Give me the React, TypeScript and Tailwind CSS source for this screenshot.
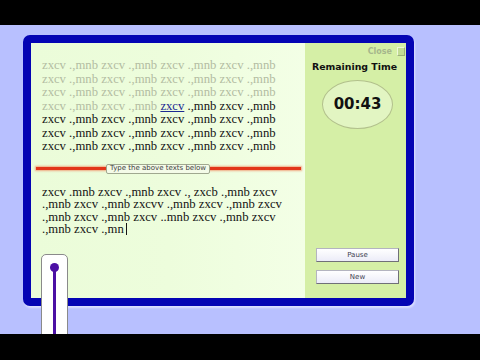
import React from "react";

const L = "zxcv .,mnb zxcv .,mnb zxcv .,mnb zxcv .,mnb";

export default function App() {
  return (
    <div className="w-[480px] h-[360px] bg-black flex flex-col overflow-hidden">
      <div className="h-[25px] shrink-0 bg-black" />
      <div className="relative h-[309px] shrink-0 bg-[#b8c0ff] pt-[10px] pl-[23px] overflow-hidden">
        <div className="w-[391px] h-[271px] border-[8px] border-[#0404b4] rounded-[7px] flex overflow-hidden shadow-[1px_2px_2px_rgba(255,255,255,0.5)]">
          {/* Left panel */}
          <div className="w-[274px] h-full bg-gradient-to-r from-[#ebfcd9] via-[#edfddc] to-[#f3ffe6] flex flex-col pl-[11px] pt-[16px] font-['Liberation_Serif','DejaVu_Serif',serif]">
            <div className="text-[12.7px] leading-[13.5px] whitespace-pre">
              <div className="text-[#b3bca2]">{L}</div>
              <div className="text-[#b3bca2]">{L}</div>
              <div className="text-[#b3bca2]">{L}</div>
              <div>
                <span className="text-[#b3bca2]">zxcv .,mnb zxcv .,mnb </span>
                <span className="text-[#1c2a92] underline">zxcv</span>
                <span className="text-[#141414]"> .,mnb zxcv .,mnb</span>
              </div>
              <div className="text-[#141414]">{L}</div>
              <div className="text-[#141414]">{L}</div>
              <div className="text-[#141414]">{L}</div>
            </div>
            <div className="relative h-[10px] mt-[10px] ml-[-6px] mr-[4px] flex items-center">
              <div className="w-full h-[3px] bg-[#e2361a] shadow-[0_0_2px_1px_rgba(240,150,110,0.8)]" />
              <div className="absolute left-[70px] top-0 h-[10px] px-[3px] flex items-center bg-[#f4fbe8] border border-[#a0a890] rounded-[2px] text-[7px] leading-none text-[#404040] font-['DejaVu_Sans',sans-serif]">
                Type the above texts below
              </div>
            </div>
            <div className="mt-[12px] text-[12.7px] leading-[12.5px] text-[#141414] whitespace-pre">
              <div>zxcv .mnb zxcv .,mnb zxcv ., zxcb .,mnb zxcv</div>
              <div>.,mnb zxcv .,mnb zxcvv .,mnb zxcv .,mnb zxcv</div>
              <div>.,mnb zxcv .,mnb zxcv ..mnb zxcv .,mnb zxcv</div>
              <div className="flex items-center">
                <span>.,mnb zxcv .,mn</span>
                <span className="ml-[2px] w-px h-[12px] bg-[#141414]" />
              </div>
            </div>
          </div>
          {/* Right panel */}
          <div className="flex-1 h-full bg-[#d5efa6] flex flex-col font-['DejaVu_Sans',sans-serif]">
            <div className="flex items-center justify-end h-[13px] mt-[2px] mr-[1px] gap-[5px]">
              <span className="text-[8px] font-bold text-[#a6b68c] leading-none">Close</span>
              <div className="w-[8px] h-[9px] bg-[#c2dc94] border border-t-[#eef8dc] border-l-[#eef8dc] border-b-[#9cb078] border-r-[#9cb078]" />
            </div>
            <div className="mt-[3px] text-center text-[9.4px] font-bold text-[#111] leading-[12px] pr-[2px]">
              Remaining Time
            </div>
            <div className="mt-[7px] ml-[17px] w-[71px] h-[49px] rounded-[50%] border border-[#b2c08c] bg-[#e2f5c2] flex items-center justify-center">
              <span className="text-[15px] font-bold text-[#111] leading-none">00:43</span>
            </div>
            <div className="flex-1" />
            <div className="pl-[11px] pr-[7px] flex flex-col gap-[8px] pb-[14px]">
              <div className="h-[14px] bg-gradient-to-b from-[#ffffff] to-[#ececf8] border border-[#b4b4c0] border-r-[#707078] border-b-[#707078] flex items-center justify-center text-[7px] text-[#404050] leading-none">
                Pause
              </div>
              <div className="h-[14px] bg-gradient-to-b from-[#ffffff] to-[#ececf8] border border-[#b4b4c0] border-r-[#707078] border-b-[#707078] flex items-center justify-center text-[7px] text-[#404050] leading-none">
                New
              </div>
            </div>
          </div>
        </div>
        {/* Slider overlay */}
        <div className="absolute left-[41px] top-[229px] w-[27px] h-[100px] bg-white border border-[#8a8a8a] rounded-[5px]">
          <div className="absolute left-[8px] top-[8px] w-[9px] h-[9px] rounded-full bg-[#4c10a4]" />
          <div className="absolute left-[11px] top-[12px] w-[3px] h-[90px] bg-[#4c10a4]" />
        </div>
      </div>
      <div className="flex-1 bg-black" />
    </div>
  );
}
